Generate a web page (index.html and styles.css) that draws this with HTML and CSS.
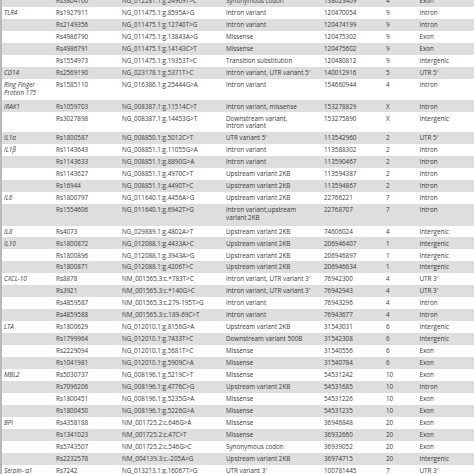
FILE: index.html
```html
<!DOCTYPE html>
<html>
<head>
<meta charset="utf-8">
<link rel="stylesheet" href="styles.css">
</head>
<body>
<div class="sheet">
<table class="snp">
<colgroup>
<col class="c-gene"><col class="c-rs"><col class="c-hgvs"><col class="c-type"><col class="c-pos"><col class="c-chr"><col class="c-reg">
</colgroup>
<tbody>
<tr class="g"><td class="gene"></td><td>Rs3804100</td><td>NG_012281.1:g.24969T&gt;C</td><td class="type">Synonymous codon</td><td>138023409</td><td>4</td><td>Exon</td></tr>
<tr><td class="gene">TLR4</td><td>Rs1927911</td><td>NG_011475.1:g.8595A&gt;G</td><td class="type">Intron variant</td><td>120470054</td><td>9</td><td>Intron</td></tr>
<tr class="g"><td class="gene"></td><td>Rs2149356</td><td>NG_011475.1:g.12740T&gt;G</td><td class="type">Intron variant</td><td>120474199</td><td>9</td><td>Intron</td></tr>
<tr><td class="gene"></td><td>Rs4986790</td><td>NG_011475.1:g.13843A&gt;G</td><td class="type">Missense</td><td>120475302</td><td>9</td><td>Exon</td></tr>
<tr class="g"><td class="gene"></td><td>Rs4986791</td><td>NG_011475.1:g.14143C&gt;T</td><td class="type">Missense</td><td>120475602</td><td>9</td><td>Exon</td></tr>
<tr><td class="gene"></td><td>Rs1554973</td><td>NG_011475.1:g.19353T&gt;C</td><td class="type">Transition substitution</td><td>120480812</td><td>9</td><td>Intergenic</td></tr>
<tr class="g"><td class="gene">CD14</td><td>Rs2569190</td><td>NG_023178.1:g.5371T&gt;C</td><td class="type">Intron variant, UTR variant 5′</td><td>140012916</td><td>5</td><td>UTR 5′</td></tr>
<tr class="tall"><td class="gene">Ring Finger Protein 175</td><td>Rs1585110</td><td>NG_016386.1:g.25444G&gt;A</td><td class="type">Intron variant</td><td>154660944</td><td>4</td><td>Intron</td></tr>
<tr class="g"><td class="gene">IRAK1</td><td>Rs1059703</td><td>NG_008387.1:g.11514C&gt;T</td><td class="type">Intron variant, missense</td><td>153278829</td><td>X</td><td>Intron</td></tr>
<tr><td class="gene"></td><td>Rs3027898</td><td>NG_008387.1:g.14453G&gt;T</td><td class="type">Downstream variant,<br>intron variant</td><td>153275890</td><td>X</td><td>Intergenic</td></tr>
<tr class="g"><td class="gene">IL1α</td><td>Rs1800587</td><td>NG_008850.1:g.5012C&gt;T</td><td class="type">UTR variant 5′</td><td>113542960</td><td>2</td><td>UTR 5′</td></tr>
<tr><td class="gene">IL1β</td><td>Rs1143643</td><td>NG_008851.1:g.11055G&gt;A</td><td class="type">Intron variant</td><td>113588302</td><td>2</td><td>Intron</td></tr>
<tr class="g"><td class="gene"></td><td>Rs1143633</td><td>NG_008851.1:g.8890G&gt;A</td><td class="type">Intron variant</td><td>113590467</td><td>2</td><td>Intron</td></tr>
<tr><td class="gene"></td><td>Rs1143627</td><td>NG_008851.1:g.4970C&gt;T</td><td class="type">Upstream variant 2KB</td><td>113594387</td><td>2</td><td>Intron</td></tr>
<tr class="g"><td class="gene"></td><td>Rs16944</td><td>NG_008851.1:g.4490T&gt;C</td><td class="type">Upstream variant 2KB</td><td>113594867</td><td>2</td><td>Intron</td></tr>
<tr><td class="gene">IL6</td><td>Rs1800797</td><td>NG_011640.1:g.4456A&gt;G</td><td class="type">Upstream variant 2KB</td><td>22766221</td><td>7</td><td>Intron</td></tr>
<tr class="g tall"><td class="gene"></td><td>Rs1554606</td><td>NG_011640.1:g.6942T&gt;G</td><td class="type">Intron variant,upstream<br>variant 2KB</td><td>22768707</td><td>7</td><td>Intron</td></tr>
<tr><td class="gene">IL8</td><td>Rs4073</td><td>NG_029889.1:g.4802A&gt;T</td><td class="type">Upstream variant 2KB</td><td>74606024</td><td>4</td><td>Intergenic</td></tr>
<tr class="g"><td class="gene">IL10</td><td>Rs1800872</td><td>NG_012088.1:g.4433A&gt;C</td><td class="type">Upstream variant 2KB</td><td>206946407</td><td>1</td><td>Intergenic</td></tr>
<tr><td class="gene"></td><td>Rs1800896</td><td>NG_012088.1:g.3943A&gt;G</td><td class="type">Upstream variant 2KB</td><td>206946897</td><td>1</td><td>Intergenic</td></tr>
<tr class="g"><td class="gene"></td><td>Rs1800871</td><td>NG_012088.1:g.4206T&gt;C</td><td class="type">Upstream variant 2KB</td><td>206946634</td><td>1</td><td>Intergenic</td></tr>
<tr><td class="gene">CXCL-10</td><td>Rs8878</td><td>NM_001565.3:c.*783T&gt;C</td><td class="type">Intron variant, UTR variant 3′</td><td>76942300</td><td>4</td><td>UTR 3′</td></tr>
<tr class="g"><td class="gene"></td><td>Rs3921</td><td>NM_001565.3:c.*140G&gt;C</td><td class="type">Intron variant, UTR variant 3′</td><td>76942943</td><td>4</td><td>UTR 3′</td></tr>
<tr><td class="gene"></td><td>Rs4859587</td><td>NM_001565.3:c.279-195T&gt;G</td><td class="type">Intron variant</td><td>76943296</td><td>4</td><td>Intron</td></tr>
<tr class="g"><td class="gene"></td><td>Rs4859588</td><td>NM_001565.3:c.189-69C&gt;T</td><td class="type">Intron variant</td><td>76943677</td><td>4</td><td>Intron</td></tr>
<tr><td class="gene">LTA</td><td>Rs1800629</td><td>NG_012010.1:g.8156G&gt;A</td><td class="type">Upstream variant 2KB</td><td>31543031</td><td>6</td><td>Intergenic</td></tr>
<tr class="g"><td class="gene"></td><td>Rs1799964</td><td>NG_012010.1:g.7433T&gt;C</td><td class="type">Downstream variant 500B</td><td>31542308</td><td>6</td><td>Intergenic</td></tr>
<tr><td class="gene"></td><td>Rs2229094</td><td>NG_012010.1:g.5681T&gt;C</td><td class="type">Missense</td><td>31540556</td><td>6</td><td>Exon</td></tr>
<tr class="g"><td class="gene"></td><td>Rs1041981</td><td>NG_012010.1:g.5909C&gt;A</td><td class="type">Missense</td><td>31540784</td><td>6</td><td>Exon</td></tr>
<tr><td class="gene">MBL2</td><td>Rs5030737</td><td>NG_008196.1:g.5219C&gt;T</td><td class="type">Missense</td><td>54531242</td><td>10</td><td>Exon</td></tr>
<tr class="g"><td class="gene"></td><td>Rs7096206</td><td>NG_008196.1:g.4776C&gt;G</td><td class="type">Upstream variant 2KB</td><td>54531685</td><td>10</td><td>Intron</td></tr>
<tr><td class="gene"></td><td>Rs1800451</td><td>NG_008196.1:g.5235G&gt;A</td><td class="type">Missense</td><td>54531226</td><td>10</td><td>Exon</td></tr>
<tr class="g"><td class="gene"></td><td>Rs1800450</td><td>NG_008196.1:g.5226G&gt;A</td><td class="type">Missense</td><td>54531235</td><td>10</td><td>Exon</td></tr>
<tr><td class="gene">BPI</td><td>Rs4358188</td><td>NM_001725.2:c.646G&gt;A</td><td class="type">Missense</td><td>36946848</td><td>20</td><td>Exon</td></tr>
<tr class="g"><td class="gene"></td><td>Rs1341023</td><td>NM_001725.2:c.47C&gt;T</td><td class="type">Missense</td><td>36932660</td><td>20</td><td>Exon</td></tr>
<tr><td class="gene"></td><td>Rs5743507</td><td>NM_001725.2:c.546G&gt;C</td><td class="type">Synonymous codon</td><td>36939052</td><td>20</td><td>Exon</td></tr>
<tr class="g"><td class="gene"></td><td>Rs2232578</td><td>NM_004139.3:c.-205A&gt;G</td><td class="type">Upstream variant 2KB</td><td>36974715</td><td>20</td><td>Intergenic</td></tr>
<tr><td class="gene">Serpin- α1</td><td>Rs7242</td><td>NG_013213.1:g.16067T&gt;G</td><td class="type">UTR variant 3′</td><td>100781445</td><td>7</td><td>UTR 3′</td></tr>
</tbody>
</table>
</div>
</body>
</html>
```
FILE: styles.css
```css
html, body {
  margin: 0;
  padding: 0;
  background: #ffffff;
  overflow: hidden;
}
.sheet {
  width: 472px;
  border-left: 2px solid #b9b9b9;
  margin-top: -4.95px;
}
.snp {
  width: 472px;
  table-layout: fixed;
  border-collapse: collapse;
  border-spacing: 0;
  font-family: "Open Sans", "Noto Sans", sans-serif;
  font-size: 6.3px;
  font-weight: 500;
  line-height: 7.7px;
  color: #3a3a3a;
}
.c-gene { width: 52px; }
.c-rs { width: 66px; }
.c-hgvs { width: 104px; }
.c-type { width: 98px; }
.c-pos { width: 62px; }
.c-chr { width: 33.5px; }
.c-reg { width: 56.5px; }
.snp td {
  padding: 2.125px 1px 2.125px 2px;
  vertical-align: top;
  white-space: normal;
  overflow: hidden;
}
.snp td.type {
  padding-right: 3px;
}
.snp tr.g td {
  background: #dedede;
}
.snp tr.tall td {
  padding-bottom: 4.2px;
}
.snp td.gene {
  font-style: italic;
}
```
